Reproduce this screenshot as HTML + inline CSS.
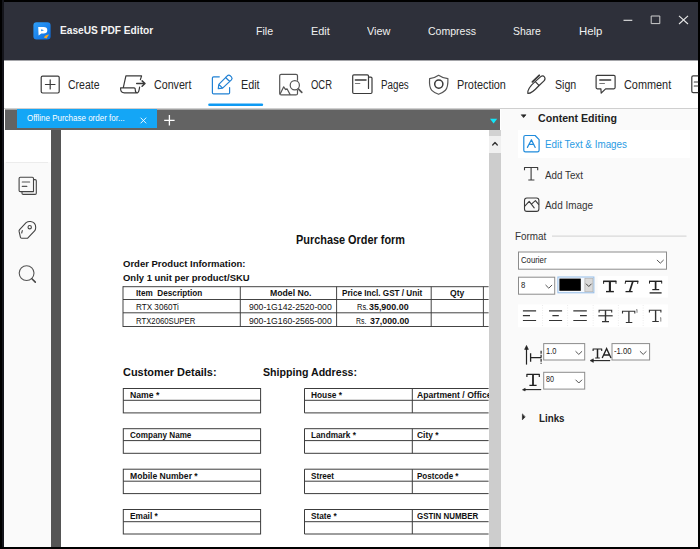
<!DOCTYPE html>
<html lang="en"><head><meta charset="utf-8"><title>EaseUS PDF Editor</title>
<style>
*{margin:0;padding:0;box-sizing:border-box}
html,body{width:700px;height:549px;overflow:hidden;background:#000}
body{position:relative;font-family:"Liberation Sans",sans-serif}
.a{position:absolute}
.t{position:absolute;white-space:nowrap;transform-origin:0 50%;display:block}
svg{position:absolute;overflow:visible}
#win{left:4px;top:2px;width:693px;height:545px;background:#fff;overflow:hidden}
#title{left:0;top:0;width:700px;height:60px;background:#2e303a}
#toolbar{left:4px;top:60px;width:694px;height:48.5px;background:#fff}
#tbline{left:4px;top:108px;width:694px;height:1px;background:#cfcfcf}
#tabbar{left:5px;top:109px;width:495.3px;height:21px;background:#636363}
#tab{left:17px;top:109px;width:140px;height:19px;background:#14a6f6}
#side{left:4px;top:130px;width:47px;height:417px;background:#fafafa}
#sidetop{left:4px;top:130px;width:47px;height:32px;background:#fff}
#sideline{left:6px;top:162px;width:42px;height:1px;background:#ececec}
#strip{left:50.8px;top:130px;width:9.8px;height:417px;background:#555}
#doc{left:60.6px;top:130px;width:428.4px;height:417px;background:#fff}
#sb{left:489px;top:130px;width:11.6px;height:417px;background:#f0f0f0}
#sbthumb{left:489px;top:153px;width:11.6px;height:394px;background:#cdcdcd}
#sbtop{left:489px;top:130px;width:11.6px;height:6px;background:#d2d2d2}
#panel{left:500.6px;top:109px;width:197.4px;height:438px;background:#fafafa}
#hl{left:517.6px;top:130px;width:172.6px;height:28px;background:#fff}
.dd{position:absolute;background:#fff;border:1px solid #8a8a8a}
.ln{position:absolute;background:#222}

</style></head>
<body>
<div class="a" id="win"></div>
<div class="a" id="title"></div>
<div class="a" style="left:0;top:0;width:700px;height:2px;background:#000"></div>
<div class="a" style="left:0;top:0;width:4px;height:549px;background:#14151b"></div>
<div class="a" style="left:0;top:0;width:2px;height:549px;background:#000"></div>
<div class="a" style="left:697.7px;top:0;width:2.3px;height:549px;background:#000"></div>
<div class="a" style="left:0;top:547px;width:700px;height:2px;background:#000"></div>
<div class="a" id="toolbar"></div>
<div class="a" style="left:4px;top:60px;width:694px;height:1px;background:#a4a5a9"></div>
<div class="a" id="tbline"></div>
<div class="a" id="tabbar"></div>
<div class="a" style="left:5px;top:109px;width:495.3px;height:1px;background:#a2a2a2"></div>
<div class="a" id="tab"></div>
<div class="a" id="side"></div>
<div class="a" id="sidetop"></div>
<div class="a" id="sideline"></div>
<div class="a" id="strip"></div>
<div class="a" id="doc"></div>
<div class="a" id="panel"></div>
<div class="a" id="hl"></div>
<svg width="700" height="549" viewBox="0 0 700 549" style="left:0;top:0" fill="none" stroke-linecap="round" stroke-linejoin="round">
<!-- logo -->
<defs><linearGradient id="lg" x1="0" y1="0" x2="1" y2="1"><stop offset="0" stop-color="#2f9ff8"/><stop offset="1" stop-color="#0a6be0"/></linearGradient></defs>
<rect x="33.4" y="22.2" width="17.2" height="17.2" rx="3.2" fill="url(#lg)"/>
<path d="M38.2,27 H43.5 Q47.3,27 47.3,30.3 Q47.3,33.6 43.5,33.6 H41.3 L38.6,35.6 Z" fill="#fff"/>
<path d="M41.2,29.2 L44,30.2 L41.2,31.3 Z" fill="#1b84ec"/>
<path d="M43.8,37.6 Q45.5,34.6 49.2,34.6 Q47.5,36.4 46.6,38.6 Z" fill="#f5a623"/>
<!-- window controls -->
<g stroke="#e8e8e8" stroke-width="1.1" stroke-linecap="butt">
<path d="M623.5,20.3 H632.3"/>
<rect x="651.2" y="16" width="8.6" height="7.6" stroke="#cfcfcf" stroke-width="1"/>
<path d="M679,15.8 L688,24 M688,15.8 L679,24"/>
</g>
<!-- toolbar icons -->
<g stroke="#3a3a3a" stroke-width="1.2">
<rect x="41.2" y="76.2" width="18" height="16.8" rx="1.4"/>
<path d="M45.4,84.5 H55 M50.2,79.9 V89"/>
<path d="M125.9,75.9 H141.6 L140.4,79.6 M125.9,75.9 L123.3,87.6 M120.6,87.8 H134.2 Q135.5,88 135.3,90 Q135.3,92.8 137.5,92.8 M120.6,87.8 Q120.2,92.8 124.5,92.8 H137.5 Q138.9,92.5 139.6,87.2"/>
<path d="M136.7,83.5 H144.5 M142.1,80.9 L145,83.5 L142.1,86.2" stroke-width="1.5"/>
</g>
<g stroke="#2181d4" stroke-width="1.2">
<path d="M219.3,76.8 H213.6 Q212.4,76.8 212.4,78 V92.7 Q212.4,93.9 213.6,93.9 H228.4 Q229.6,93.9 229.6,92.7 V87.5"/>
<path d="M218.3,88.6 L218.8,84.3 L227.3,75.8 Q228.8,74.4 230.3,75.8 L231.4,76.9 Q232.8,78.4 231.4,79.9 L222.6,88.1 Z M218.8,84.3 L222.6,88.1 M225.6,77.5 L229.7,81.5"/>
</g>
<rect x="208.2" y="103.4" width="55" height="2.6" rx="1.3" fill="#0f9af3"/>
<g stroke="#555" stroke-width="1.2">
<path d="M297.5,80.2 V75.8 Q297.5,74.3 296,74.3 H281.2 Q279.7,74.3 279.7,75.8 V93.4 Q279.7,94.9 281.2,94.9 H296 Q297.5,94.9 297.5,93.4 V90.3"/>
<circle cx="294.8" cy="85.3" r="4.6"/>
<path d="M298.3,88.8 L301.8,92.4" stroke-width="1.7"/>
<path d="M280.4,93.5 L283.7,86.8 L285.6,89.6 L287,88.8 L290,94.4"/>
</g>
<g stroke="#3a3a3a" stroke-width="1.2">
<path d="M368.5,88.4 V76.1 Q368.5,74.9 367.3,74.9 H353.9 Q352.7,74.9 352.7,76.1 V92.3 Q352.7,93.5 353.9,93.5 H370.8 Q372,93.5 372,92.3 V78.3 Q372,77.1 370.8,77.1 H368.5"/>
<path d="M355.4,80 H366" stroke-width="1.5"/><path d="M355.4,83.5 H359.8" stroke="#777"/>
<path d="M438.6,75.3 Q435,78 429.6,78.6 Q429,87.5 431.8,90.3 Q434.6,93 438.6,94.3 Q442.6,93 445.4,90.3 Q448.2,87.5 447.9,78.6 Q442.2,78 438.6,75.3 Z" stroke="#555"/>
<circle cx="438.8" cy="84.1" r="4.1" stroke-width="1.5"/>
<path d="M527.8,93.4 Q527.2,88.5 535.4,81.4 L540.8,76.6 Q543,75 544.5,77 Q545.8,79 544,80.8 L538.6,86 Q531.5,93.8 527.8,93.4 Z M535.6,81.9 L538.9,85.4"/>
<path d="M532.4,81.8 L539.2,75.3" stroke-width="1.8"/>
<path d="M597.3,75.3 H613.9 Q615.1,75.3 615.1,76.5 V87.6 Q615.1,88.8 613.9,88.8 H605.6 L601.2,93.2 L600.9,88.8 H597.3 Q596.1,88.8 596.1,87.6 V76.5 Q596.1,75.3 597.3,75.3 Z"/>
<path d="M599.8,80 H610.6" stroke-width="1.5"/><path d="M599.8,83.5 H604.4" stroke="#777"/>
<path d="M698,75.8 H693.2 Q691.8,75.8 691.8,77.2 V91.3 Q691.8,92.7 693.2,92.7 H698 M694.3,82 H698 M694.3,86 H698"/>
</g>
<!-- tab bar -->
<g stroke="#fff" stroke-width="1" stroke-linecap="butt">
<path d="M140.6,117.7 L146.2,123.3 M146.2,117.7 L140.6,123.3" stroke-width="0.9"/>
<path d="M164.2,120.3 H174.6 M169.4,115.1 V125.5" stroke-width="1.3"/>
</g>
<path d="M490,118.8 H497.2 L493.6,123.4 Z" fill="#12e6f8"/>
<!-- sidebar icons -->
<g stroke="#444" stroke-width="1.1">
<path d="M33.5,191.6 V178.4 Q33.5,177.2 32.3,177.2 H20.3 Q19.1,177.2 19.1,178.4 V190.4 Q19.1,191.6 20.3,191.6 Z"/>
<path d="M33.5,179.6 H35.1 Q36.3,179.6 36.3,180.8 V193.2 Q36.3,194.4 35.1,194.4 H23.2 Q22,194.4 22,193.2 V191.6"/>
<path d="M22.3,182 H29.6 M22.3,186.4 H26.8" stroke="#555" stroke-width="1.2"/>
<path d="M26.1,222.6 Q28,221.2 30.5,221.5 Q35.8,222.3 35.7,227.5 Q35.7,229.6 34.6,230.8 L27.7,238.2 H21.6 Q20.6,238.2 20.4,237.2 L19.1,231.4 Q18.9,230.4 19.6,229.6 Z"/>
<circle cx="29.7" cy="227.2" r="1.7"/>
<path d="M22.3,230.6 L21.7,233"/>
<circle cx="26.6" cy="273.1" r="7.4" stroke="#555"/>
<path d="M31.9,278.7 L35.3,282.1" stroke-width="1.5"/>
</g>
<!-- scrollbar chevron -->
<!-- panel -->
<path d="M521.5,114.8 H526 L523.75,117.4 Z" fill="#222" stroke="#222" stroke-width="0.6"/>
<path d="M522.4,414.3 V419.8 L525,417 Z" fill="#222" stroke="#222" stroke-width="0.6"/>
<g stroke="#1f8bdc" stroke-width="1.2">
<path d="M525.4,135.5 H535.1 L539.1,139.7 V150.2 Q539.1,151.8 537.5,151.8 H525.4 Q523.8,151.8 523.8,150.2 V137.1 Q523.8,135.5 525.4,135.5 Z"/>
<path d="M527.4,147.4 L531.4,139.7 L535.2,147.4 M528.9,144.3 H533.8"/>
</g>
<g stroke="#3a3a3a" stroke-width="1.1">
<path d="M524.5,170.2 V167.5 H537.7 V170.2 M531.1,167.5 V180 M528.3,180 H534.4" stroke-linecap="butt"/>
<rect x="524.5" y="198" width="14.4" height="13.4" rx="2.4"/>
<path d="M524.8,206.2 L529.2,201.4 L534.2,207.8 M531.7,203.8 L535.4,200.6 L538.6,204.4"/>
</g>
<path d="M552,236.1 H686.5" stroke="#d0d0d0" stroke-width="1" stroke-linecap="butt"/>
</svg>

<svg width="700" height="549" viewBox="0 0 700 549" style="left:0;top:0" fill="none" stroke-linecap="butt">
<!-- document table -->
<g stroke="#3a3a3a" stroke-width="0.95">
<path d="M123,286.7 H488.6 M123,299.5 H488.6 M123,312.8 H488.6 M123,326.5 H488.6"/>
<path d="M123,286.2 V327 M240.3,286.7 V326.5 M336.6,286.7 V326.5 M431.2,286.7 V326.5 M483.4,286.7 V326.5"/>
</g>
<g stroke="#3c3c3c" stroke-width="1">
<rect x="123.3" y="388.5" width="137.3" height="24.4"/><path d="M123.3,400.3 H260.6"/>
<rect x="123.3" y="428.7" width="137.3" height="24.6"/><path d="M123.3,440.6 H260.6"/>
<rect x="123.3" y="469.2" width="137.3" height="24.4"/><path d="M123.3,481.2 H260.6"/>
<rect x="123.3" y="509.5" width="137.3" height="24.5"/><path d="M123.3,521.7 H260.6"/>
<path d="M488.6,388.5 H304.5 V412.9 H488.6 M304.5,400.3 H488.6 M412.3,388.5 V412.9"/>
<path d="M488.6,428.7 H304.5 V453.3 H488.6 M304.5,440.6 H488.6 M412.3,428.7 V453.3"/>
<path d="M488.6,469.2 H304.5 V493.6 H488.6 M304.5,481.2 H488.6 M412.3,469.2 V493.6"/>
<path d="M488.6,509.5 H304.5 V534 H488.6 M304.5,521.7 H488.6 M412.3,509.5 V534"/>
</g>
<!-- format: dropdown boxes -->
<g fill="#fff" stroke="#8c8c8c" stroke-width="1">
<rect x="518.5" y="252" width="148" height="17.2"/>
<rect x="518.5" y="277.2" width="36.2" height="17"/>
<rect x="543.7" y="343.6" width="41" height="16.4"/>
<rect x="612" y="343.6" width="37.6" height="16.4"/>
<rect x="543.7" y="372.3" width="41" height="16.8"/>
</g>
<g stroke="#555" stroke-width="1" stroke-linecap="round" stroke-linejoin="round">
<path d="M657.2,260.2 L660.3,263.2 L663.4,260.2"/>
<path d="M545.8,285.2 L548.8,288.2 L551.8,285.2"/>
<path d="M575.8,351.5 L578.8,354.4 L581.8,351.5"/>
<path d="M640.2,351.5 L643.2,354.4 L646.2,351.5"/>
<path d="M575.8,380 L578.8,383 L581.8,380"/>
</g>
<!-- color box -->
<rect x="557.9" y="277" width="36" height="15.8" fill="#f6f9fd" stroke="#93bde9" stroke-width="1"/>
<rect x="559.4" y="278.6" width="21.4" height="12.2" fill="#000"/>
<rect x="584.9" y="278.3" width="8" height="13.4" fill="#dadada" stroke="#b4b4b4" stroke-width="0.8"/>
<path d="M586.3,284 L588.8,286.5 L591.3,284" stroke="#444" stroke-width="1" stroke-linecap="round"/>
<!-- white button groups -->
<rect x="597.6" y="276" width="70.3" height="21.6" fill="#fff"/>
<rect x="518" y="304.4" width="150" height="22.9" fill="#fff"/>
<g stroke="#ececec" stroke-width="1" stroke-dasharray="1 1.5">
<path d="M542.5,305 V327.5 M567.6,305 V327.5 M593.2,305 V327.5 M618.4,305 V327.5 M643.2,305 V327.5"/>
</g>
<!-- T bold / italic / underline -->
<g stroke="#222" stroke-linecap="butt">
<path d="M603.3,281.3 H616.3" stroke-width="1.6"/><path d="M603.6,280.9 V283.8 M616,280.9 V283.8" stroke-width="1"/>
<path d="M609.9,281.3 V291.6" stroke-width="2.1"/><path d="M606,291.6 H613.9" stroke-width="1.4"/>
<path d="M625.4,281.3 H638.2" stroke-width="1.4"/><path d="M625.6,280.9 L625.2,283.8 M638,280.9 L637.6,283.8" stroke-width="1"/>
<path d="M632.9,281.3 L629.6,291.6" stroke-width="1.7"/><path d="M625.5,291.6 H632.6" stroke-width="1.3"/>
<path d="M649.2,281.3 H662" stroke-width="1.4"/><path d="M649.5,280.9 V283.6 M661.7,280.9 V283.6" stroke-width="1"/>
<path d="M655.6,281.3 V289.6" stroke-width="1.7"/><path d="M652.3,289.6 H659.2" stroke-width="1.2"/>
<path d="M649.6,292.9 H661.6" stroke-width="1.3"/>
</g>
<!-- align icons -->
<g stroke="#333" stroke-width="1.1">
<path d="M522.9,310.9 H536.1 M522.9,315.6 H530 M522.9,320.5 H536.1"/>
<path d="M549,310.9 H562.1 M552.4,315.6 H558.8 M549,320.5 H562.1"/>
<path d="M573.3,310.9 H586.8 M580,315.6 H586.8 M573.3,320.5 H586.8"/>
</g>
<!-- strike / super / sub -->
<g stroke="#333" stroke-linecap="butt">
<path d="M598.8,310.2 H612 M599.1,309.8 V312.6 M611.7,309.8 V312.6 M602,321.6 H609" stroke-width="1.1"/><path d="M605.5,310.2 V321.6" stroke-width="1.4"/>
<path d="M598.3,315.8 H612.7" stroke-width="1.2"/>
<path d="M622.2,311.2 H635.1 M622.5,310.8 V313.6 M634.8,310.8 V313.6 M625.8,322.5 H632.3" stroke-width="1.1"/><path d="M628.9,311.2 V322.5" stroke-width="1.4"/>
<path d="M636.2,310 L637,309.4 V312.8" stroke-width="0.8" stroke="#666"/>
<path d="M649.1,310.2 H661.2 M649.4,309.8 V312.6 M660.9,309.8 V312.6 M652.3,321.5 H658.8" stroke-width="1.1"/><path d="M655.6,310.2 V321.5" stroke-width="1.4"/>
<path d="M660,318.2 L660.8,317.6 V321.6" stroke-width="0.8" stroke="#666"/>
</g>
<!-- line spacing icon -->
<g stroke="#222" stroke-linecap="butt">
<path d="M526.5,347 V364.6" stroke-width="1.2"/><path d="M524.6,349.4 L526.5,345.4 L528.4,349.4 Z" fill="#222" stroke-width="0.6"/>
<path d="M530.6,353.2 V361.8 M530.6,357.6 H541.1" stroke-width="1.3"/>
<path d="M541.1,350.8 V363.8" stroke-width="1.2" stroke-dasharray="3 1"/>
<!-- TA -->
<path d="M592.8,349 H602 M593.1,348.7 V351 M601.7,348.7 V351 M595.2,358 H599.8" stroke-width="1.1"/><path d="M597.5,349 V358" stroke-width="1.5"/>
<path d="M602.2,358 L606.6,348.6 L611,358 M603.8,355 H609.4" stroke-width="1.3" stroke-linejoin="miter"/>
<path d="M592,360.6 H610.2" stroke-width="1.1"/><path d="M593.4,358.8 L590,360.6 L593.4,362.4 Z" fill="#222" stroke-width="0.5"/>
<!-- T scale -->
<path d="M526.6,374.4 H539.6 M526.9,374 V377 M539.3,374 V377 M529.4,385.4 H536.6" stroke-width="1.2"/><path d="M533,374.4 V385.4" stroke-width="1.8"/>
<path d="M523.6,389.6 H541.2" stroke-width="1.1"/><path d="M525.2,388.2 L522.4,389.8 L525.2,391 Z" fill="#222" stroke-width="0.5"/>
</g>
</svg>

<span class="t" id="t0" style='left:59.8px;top:23.52px;font-size:10.8px;line-height:12.96px;color:#f4f4f4;font-family:"Liberation Sans", sans-serif;font-weight:bold;transform:scaleX(0.9414);'>EaseUS PDF Editor</span>
<span class="t" id="t1" style='left:255.5px;top:24.78px;font-size:11.2px;line-height:13.44px;color:#f0f0f0;font-family:"Liberation Sans", sans-serif;transform:scaleX(0.9484);'>File</span>
<span class="t" id="t2" style='left:310.5px;top:24.78px;font-size:11.2px;line-height:13.44px;color:#f0f0f0;font-family:"Liberation Sans", sans-serif;transform:scaleX(0.9750);'>Edit</span>
<span class="t" id="t3" style='left:367.2px;top:24.78px;font-size:11.2px;line-height:13.44px;color:#f0f0f0;font-family:"Liberation Sans", sans-serif;transform:scaleX(0.9731);'>View</span>
<span class="t" id="t4" style='left:428px;top:24.78px;font-size:11.2px;line-height:13.44px;color:#f0f0f0;font-family:"Liberation Sans", sans-serif;transform:scaleX(0.9415);'>Compress</span>
<span class="t" id="t5" style='left:513px;top:24.78px;font-size:11.2px;line-height:13.44px;color:#f0f0f0;font-family:"Liberation Sans", sans-serif;transform:scaleX(0.9310);'>Share</span>
<span class="t" id="t6" style='left:578.6px;top:24.78px;font-size:11.2px;line-height:13.44px;color:#f0f0f0;font-family:"Liberation Sans", sans-serif;transform:scaleX(1.0167);'>Help</span>
<span class="t" id="t7" style='left:68.3px;top:77.80px;font-size:12px;line-height:14.40px;color:#262626;font-family:"Liberation Sans", sans-serif;transform:scaleX(0.8742);'>Create</span>
<span class="t" id="t8" style='left:154.2px;top:77.80px;font-size:12px;line-height:14.40px;color:#262626;font-family:"Liberation Sans", sans-serif;transform:scaleX(0.8898);'>Convert</span>
<span class="t" id="t9" style='left:241px;top:77.80px;font-size:12px;line-height:14.40px;color:#262626;font-family:"Liberation Sans", sans-serif;transform:scaleX(0.8991);'>Edit</span>
<span class="t" id="t10" style='left:311px;top:77.80px;font-size:12px;line-height:14.40px;color:#262626;font-family:"Liberation Sans", sans-serif;transform:scaleX(0.7873);'>OCR</span>
<span class="t" id="t11" style='left:381.3px;top:77.80px;font-size:12px;line-height:14.40px;color:#262626;font-family:"Liberation Sans", sans-serif;transform:scaleX(0.8140);'>Pages</span>
<span class="t" id="t12" style='left:457.3px;top:77.80px;font-size:12px;line-height:14.40px;color:#262626;font-family:"Liberation Sans", sans-serif;transform:scaleX(0.9050);'>Protection</span>
<span class="t" id="t13" style='left:554.5px;top:77.80px;font-size:12px;line-height:14.40px;color:#262626;font-family:"Liberation Sans", sans-serif;transform:scaleX(0.8863);'>Sign</span>
<span class="t" id="t14" style='left:623.8px;top:77.80px;font-size:12px;line-height:14.40px;color:#262626;font-family:"Liberation Sans", sans-serif;transform:scaleX(0.9074);'>Comment</span>
<span class="t" id="t15" style='left:26.5px;top:113.92px;font-size:8.3px;line-height:9.96px;color:#fff;font-family:"Liberation Sans", sans-serif;transform:scaleX(0.9634);'>Offline Purchase order for...</span>
<span class="t" id="t16" style='left:538px;top:111.90px;font-size:11px;line-height:13.20px;color:#222;font-family:"Liberation Sans", sans-serif;font-weight:bold;transform:scaleX(0.9649);'>Content Editing</span>
<span class="t" id="t17" style='left:545px;top:138.56px;font-size:10.4px;line-height:12.48px;color:#2a9be3;font-family:"Liberation Sans", sans-serif;transform:scaleX(0.9487);'>Edit Text &amp; Images</span>
<span class="t" id="t18" style='left:545px;top:169.56px;font-size:10.4px;line-height:12.48px;color:#333;font-family:"Liberation Sans", sans-serif;transform:scaleX(0.9441);'>Add Text</span>
<span class="t" id="t19" style='left:545px;top:199.76px;font-size:10.4px;line-height:12.48px;color:#333;font-family:"Liberation Sans", sans-serif;transform:scaleX(0.9549);'>Add Image</span>
<span class="t" id="t20" style='left:514.7px;top:230.76px;font-size:10.4px;line-height:12.48px;color:#333;font-family:"Liberation Sans", sans-serif;transform:scaleX(0.9507);'>Format</span>
<span class="t" id="t21" style='left:520.9px;top:255.68px;font-size:8.2px;line-height:9.84px;color:#222;font-family:"Liberation Sans", sans-serif;transform:scaleX(0.9494);'>Courier</span>
<span class="t" id="t22" style='left:520.9px;top:279.94px;font-size:8.6px;line-height:10.32px;color:#222;font-family:"Liberation Sans", sans-serif;transform:scaleX(0.8993);'>8</span>
<span class="t" id="t23" style='left:546.4px;top:345.86px;font-size:8.4px;line-height:10.08px;color:#222;font-family:"Liberation Sans", sans-serif;transform:scaleX(0.8922);'>1.0</span>
<span class="t" id="t24" style='left:613.9px;top:345.86px;font-size:8.4px;line-height:10.08px;color:#222;font-family:"Liberation Sans", sans-serif;transform:scaleX(0.9165);'>-1.00</span>
<span class="t" id="t25" style='left:545.9px;top:373.96px;font-size:8.4px;line-height:10.08px;color:#222;font-family:"Liberation Sans", sans-serif;transform:scaleX(0.8576);'>80</span>
<span class="t" id="t26" style='left:538.5px;top:411.84px;font-size:10.6px;line-height:12.72px;color:#222;font-family:"Liberation Sans", sans-serif;font-weight:bold;transform:scaleX(0.9215);'>Links</span>
<span class="t" id="t27" style='left:296px;top:232.80px;font-size:12px;line-height:14.40px;color:#111;font-family:"Liberation Sans", sans-serif;font-weight:bold;transform:scaleX(0.9080);'>Purchase Order form</span>
<span class="t" id="t28" style='left:123.4px;top:257.66px;font-size:9.4px;line-height:11.28px;color:#111;font-family:"Liberation Sans", sans-serif;font-weight:bold;transform:scaleX(1.0129);'>Order Product Information:</span>
<span class="t" id="t29" style='left:123.4px;top:271.66px;font-size:9.4px;line-height:11.28px;color:#111;font-family:"Liberation Sans", sans-serif;font-weight:bold;transform:scaleX(1.0085);'>Only 1 unit per product/SKU</span>
<span class="t" id="t30" style='left:135.7px;top:288.92px;font-size:8.3px;line-height:9.96px;color:#111;font-family:"Liberation Sans", sans-serif;font-weight:bold;transform:scaleX(0.9850);'>Item&nbsp; Description</span>
<span class="t" id="t31" style='left:270px;top:288.92px;font-size:8.3px;line-height:9.96px;color:#111;font-family:"Liberation Sans", sans-serif;font-weight:bold;transform:scaleX(1.0469);'>Model No.</span>
<span class="t" id="t32" style='left:342.3px;top:288.92px;font-size:8.3px;line-height:9.96px;color:#111;font-family:"Liberation Sans", sans-serif;font-weight:bold;transform:scaleX(0.9827);'>Price Incl. GST / Unit</span>
<span class="t" id="t33" style='left:450px;top:288.92px;font-size:8.3px;line-height:9.96px;color:#111;font-family:"Liberation Sans", sans-serif;font-weight:bold;transform:scaleX(1.0330);'>Qty</span>
<span class="t" id="t34" style='left:135.7px;top:302.52px;font-size:8.3px;line-height:9.96px;color:#111;font-family:"Liberation Sans", sans-serif;transform:scaleX(0.9792);'>RTX 3060Ti</span>
<span class="t" id="t35" style='left:248.6px;top:302.52px;font-size:8.3px;line-height:9.96px;color:#111;font-family:"Liberation Sans", sans-serif;transform:scaleX(1.0423);'>900-1G142-2520-000</span>
<span class="t" id="t36" style='left:357px;top:302.52px;font-size:8.3px;line-height:9.96px;color:#111;font-family:"Liberation Sans", sans-serif;transform:scaleX(0.8994);'>Rs.</span>
<span class="t" id="t37" style='left:368.6px;top:302.52px;font-size:8.3px;line-height:9.96px;color:#111;font-family:"Liberation Sans", sans-serif;font-weight:bold;transform:scaleX(1.0725);'>35,900.00</span>
<span class="t" id="t38" style='left:135.7px;top:316.82px;font-size:8.3px;line-height:9.96px;color:#111;font-family:"Liberation Sans", sans-serif;transform:scaleX(0.9339);'>RTX2060SUPER</span>
<span class="t" id="t39" style='left:248.6px;top:316.82px;font-size:8.3px;line-height:9.96px;color:#111;font-family:"Liberation Sans", sans-serif;transform:scaleX(1.0423);'>900-1G160-2565-000</span>
<span class="t" id="t40" style='left:356.4px;top:316.82px;font-size:8.3px;line-height:9.96px;color:#111;font-family:"Liberation Sans", sans-serif;transform:scaleX(0.8351);'>Rs.</span>
<span class="t" id="t41" style='left:370px;top:316.82px;font-size:8.3px;line-height:9.96px;color:#111;font-family:"Liberation Sans", sans-serif;font-weight:bold;transform:scaleX(1.0617);'>37,000.00</span>
<span class="t" id="t42" style='left:123.4px;top:365.90px;font-size:11px;line-height:13.20px;color:#111;font-family:"Liberation Sans", sans-serif;font-weight:bold;transform:scaleX(0.9943);'>Customer Details:</span>
<span class="t" id="t43" style='left:263.4px;top:365.90px;font-size:11px;line-height:13.20px;color:#111;font-family:"Liberation Sans", sans-serif;font-weight:bold;transform:scaleX(0.9653);'>Shipping Address:</span>
<span class="t" id="t44" style='left:129.6px;top:390.82px;font-size:8.3px;line-height:9.96px;color:#111;font-family:"Liberation Sans", sans-serif;font-weight:bold;transform:scaleX(1.0448);'>Name *</span>
<span class="t" id="t45" style='left:129.6px;top:430.52px;font-size:8.3px;line-height:9.96px;color:#111;font-family:"Liberation Sans", sans-serif;font-weight:bold;transform:scaleX(0.9790);'>Company Name</span>
<span class="t" id="t46" style='left:129.6px;top:471.72px;font-size:8.3px;line-height:9.96px;color:#111;font-family:"Liberation Sans", sans-serif;font-weight:bold;transform:scaleX(1.0341);'>Mobile Number *</span>
<span class="t" id="t47" style='left:129.6px;top:511.82px;font-size:8.3px;line-height:9.96px;color:#111;font-family:"Liberation Sans", sans-serif;font-weight:bold;transform:scaleX(1.0046);'>Email *</span>
<span class="t" id="t48" style='left:311.4px;top:390.82px;font-size:8.3px;line-height:9.96px;color:#111;font-family:"Liberation Sans", sans-serif;font-weight:bold;transform:scaleX(1.0035);'>House *</span>
<span class="t" id="t49" style='left:311.4px;top:430.52px;font-size:8.3px;line-height:9.96px;color:#111;font-family:"Liberation Sans", sans-serif;font-weight:bold;transform:scaleX(0.9936);'>Landmark *</span>
<span class="t" id="t50" style='left:311.4px;top:471.72px;font-size:8.3px;line-height:9.96px;color:#111;font-family:"Liberation Sans", sans-serif;font-weight:bold;transform:scaleX(0.9817);'>Street</span>
<span class="t" id="t51" style='left:311.4px;top:511.82px;font-size:8.3px;line-height:9.96px;color:#111;font-family:"Liberation Sans", sans-serif;font-weight:bold;transform:scaleX(0.9950);'>State *</span>
<span class="t" id="t52" style='left:417px;top:390.82px;font-size:8.3px;line-height:9.96px;color:#111;font-family:"Liberation Sans", sans-serif;font-weight:bold;transform:scaleX(1.0358);'>Apartment / Office</span>
<span class="t" id="t53" style='left:417px;top:430.52px;font-size:8.3px;line-height:9.96px;color:#111;font-family:"Liberation Sans", sans-serif;font-weight:bold;transform:scaleX(1.0180);'>City *</span>
<span class="t" id="t54" style='left:417.3px;top:471.62px;font-size:8.3px;line-height:9.96px;color:#111;font-family:"Liberation Sans", sans-serif;font-weight:bold;transform:scaleX(0.9676);'>Postcode *</span>
<span class="t" id="t55" style='left:417.3px;top:511.52px;font-size:8.3px;line-height:9.96px;color:#111;font-family:"Liberation Sans", sans-serif;font-weight:bold;transform:scaleX(0.9566);'>GSTIN NUMBER</span>
<div class="a" id="sb"></div>
<div class="a" id="sbthumb"></div>
<div class="a" id="sbtop"></div>
<svg width="20" height="20" viewBox="485 135 20 20" style="left:485px;top:135px" fill="none"><path d="M492.7,145 L495,142.5 L497.3,145" stroke="#333" stroke-width="1.3" stroke-linecap="round" stroke-linejoin="round"/></svg>

</body></html>
